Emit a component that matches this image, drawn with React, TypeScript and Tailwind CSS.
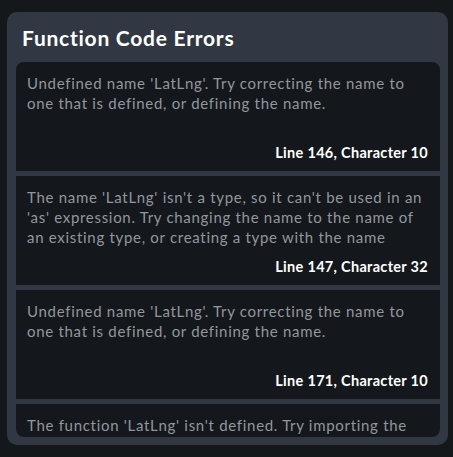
import React from "react";

const errors = [
  { msg: "Undefined name 'LatLng'. Try correcting the name to one that is defined, or defining the name.", loc: "Line 146, Character 10" },
  { msg: "The name 'LatLng' isn't a type, so it can't be used in an 'as' expression. Try changing the name to the name of an existing type, or creating a type with the name", loc: "Line 147, Character 32" },
  { msg: "Undefined name 'LatLng'. Try correcting the name to one that is defined, or defining the name.", loc: "Line 171, Character 10" },
  { msg: "The function 'LatLng' isn't defined. Try importing the library that defines 'LatLng', correcting the name to the name of an existing function, or defining a function named 'LatLng'.", loc: "Line 172, Character 20" },
];

export default function App() {
  return (
    <div
      className="w-[453px] h-[457px] bg-[#14181b] pt-[12px] pl-[7px]"
      style={{ fontFamily: "Lato, 'Noto Sans', sans-serif" }}
    >
      <div className="w-[441px] h-[433px] rounded-[10px] bg-[#313844] pl-[9px] pr-[8px] pb-[8px] flex flex-col">
        <div className="pt-[14px] pb-[12px] pl-[6px] text-[21px] leading-[24px] font-bold tracking-[0.75px] text-white">
          Function Code Errors
        </div>
        <div className="flex-1 rounded-[8px] overflow-hidden flex flex-col gap-[5px]">
          {errors.map((e, i) => (
            <div
              key={i}
              className="shrink-0 h-[109px] bg-[#14171b] pl-[11px] pr-[12px] pt-[11px] pb-[8px] flex flex-col justify-between"
            >
              <p className="text-[15px] leading-[20px] tracking-[0.7px] text-[#92979e] max-h-[60px] overflow-hidden">{e.msg}</p>
              <div className="text-right text-[14.5px] leading-[20px] font-bold tracking-[0.3px] text-white">{e.loc}</div>
            </div>
          ))}
        </div>
      </div>
    </div>
  );
}
